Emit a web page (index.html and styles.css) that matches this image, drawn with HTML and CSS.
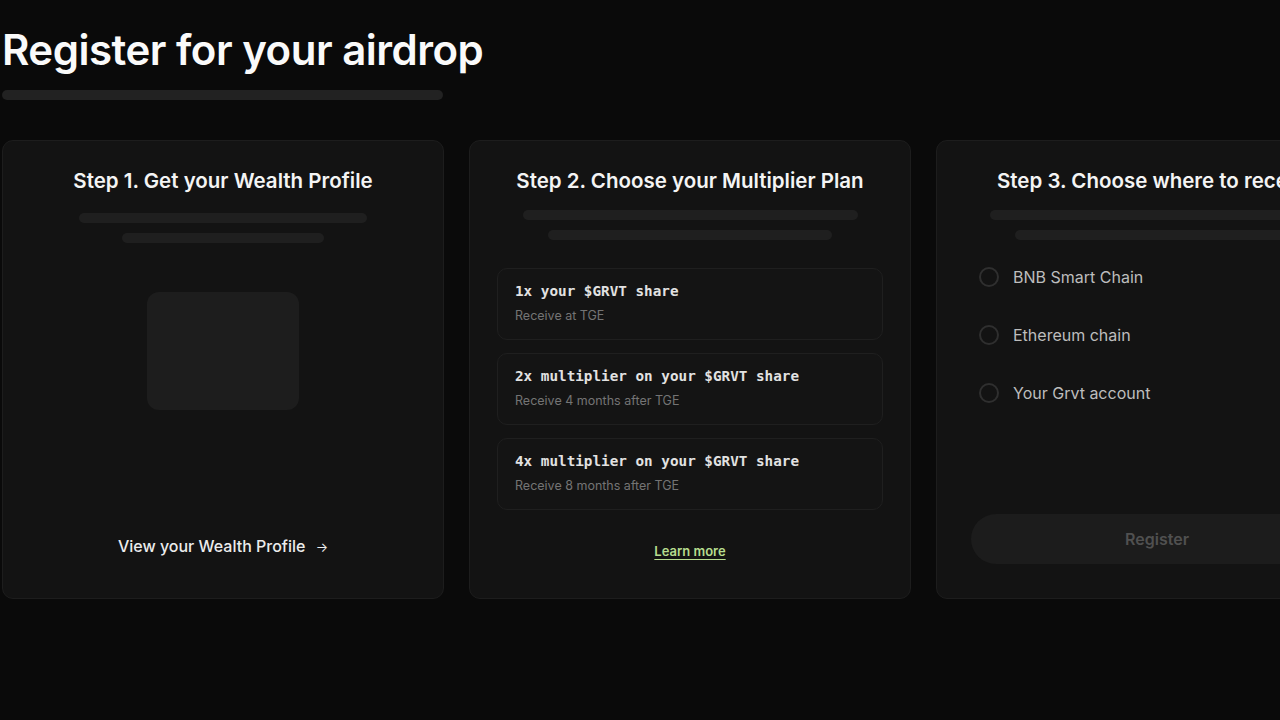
FILE: index.html
```html
<!DOCTYPE html>
<html lang="en">
<head>
  <meta charset="UTF-8" />
  <meta name="viewport" content="width=device-width, initial-scale=1.0"/>
  <title>Register for your airdrop</title>
  <link rel="stylesheet" href="styles.css">
</head>

<body>
  <h1 class="page-title">Register for your airdrop</h1>
  <div class="skeleton skeleton-title"></div>

  <div class="steps">
    <section class="card card-profile">
      <h2>Step 1. Get your Wealth Profile</h2>
      <div class="skeleton-lines">
        <div class="skeleton" style="width: 288px"></div>
        <div class="skeleton" style="width: 202px"></div>
      </div>
      <div class="profile-thumb"></div>
      <a href="#" class="profile-link">View your Wealth Profile <span class="arrow">&rarr;</span></a>
    </section>

    <section class="card card-plan">
      <h2>Step 2. Choose your Multiplier Plan</h2>
      <div class="skeleton-lines">
        <div class="skeleton" style="width: 335px"></div>
        <div class="skeleton" style="width: 284px"></div>
      </div>
      <div class="plans">
        <div class="plan">
          <div class="plan-name">1x your $GRVT share</div>
          <div class="plan-note">Receive at TGE</div>
        </div>
        <div class="plan">
          <div class="plan-name">2x multiplier on your $GRVT share</div>
          <div class="plan-note">Receive 4 months after TGE</div>
        </div>
        <div class="plan">
          <div class="plan-name">4x multiplier on your $GRVT share</div>
          <div class="plan-note">Receive 8 months after TGE</div>
        </div>
      </div>
      <a href="#" class="learn-more">Learn more</a>
    </section>

    <section class="card card-chain">
      <h2>Step 3. Choose where to receive</h2>
      <div class="skeleton-lines">
        <div class="skeleton" style="width: 335px"></div>
        <div class="skeleton" style="width: 284px"></div>
      </div>
      <div class="chains">
        <label class="chain"><span class="radio"></span>BNB Smart Chain</label>
        <label class="chain"><span class="radio"></span>Ethereum chain</label>
        <label class="chain"><span class="radio"></span>Your Grvt account</label>
      </div>
      <button class="register" disabled>Register</button>
    </section>
  </div>
</body>
</html>
```

FILE: styles.css
```css
* {margin: 0; padding: 0; box-sizing: border-box;}
body {
  font-family: "Inter", "Noto Sans", sans-serif;
  background: #0a0a0a;
  color: #f2f2f2;
  overflow: hidden;
  padding: 0 2px;
  width: 1280px;
}

.page-title {
  font-size: 42px;
  font-weight: 600;
  line-height: 52px;
  letter-spacing: -0.5px;
  padding-top: 24px;
  color: #fafafa;
}

.skeleton {
  height: 10px;
  border-radius: 5px;
  background: #1f1f1f;
}
.skeleton-title {
  width: 441px;
  margin-top: 14px;
  background: #222;
}

.steps {
  display: flex;
  gap: 25px;
  margin-top: 40px;
}

.card {
  flex-shrink: 0;
  width: 442px;
  height: 459px;
  background: #131313;
  border: 1px solid #1d1d1d;
  border-radius: 11px;
  padding: 26px 27px 0;
  display: flex;
  flex-direction: column;
  align-items: center;
  white-space: nowrap;
}

.card h2 {
  font-size: 20.5px;
  font-weight: 600;
  line-height: 28px;
  letter-spacing: 0;
  color: #f4f4f4;
}

.skeleton-lines {
  display: flex;
  flex-direction: column;
  align-items: center;
  gap: 10px;
  margin-top: 15px;
}
.card-profile .skeleton-lines {
  margin-top: 18px;
}

.profile-thumb {
  width: 152px;
  height: 118px;
  margin-top: 49px;
  border-radius: 12px;
  background: #1d1d1d;
}

.profile-link {
  margin-top: auto;
  margin-bottom: 40px;
  font-size: 16px;
  font-weight: 500;
  color: #ececec;
  text-decoration: none;
  line-height: 22px;
}
.profile-link .arrow {
  margin-left: 6px;
  font-size: 13px;
  font-weight: 400;
}

.plans {
  align-self: stretch;
  display: flex;
  flex-direction: column;
  gap: 13px;
  margin-top: 28px;
}
.plan {
  height: 72px;
  padding: 13px 17px 0;
  border: 1px solid #1f1f1f;
  border-radius: 10px;
  background: #141414;
}
.plan-name {
  font-family: "DejaVu Sans Mono", "Liberation Mono", monospace;
  font-size: 14.3px;
  font-weight: bold;
  line-height: 18px;
  color: #e2e2e2;
}
.plan-note {
  margin-top: 8px;
  font-size: 12.5px;
  line-height: 16px;
  color: #747474;
}

.learn-more {
  margin-top: auto;
  margin-bottom: 38px;
  font-size: 13px;
  font-weight: 600;
  line-height: 18px;
  color: #b6dc8e;
  text-decoration: underline;
  text-underline-offset: 3px;
}

.chains {
  align-self: stretch;
  display: flex;
  flex-direction: column;
  gap: 38px;
  margin-top: 27px;
  padding-left: 15px;
}
.chain {
  display: flex;
  align-items: center;
  gap: 14px;
  font-size: 16px;
  line-height: 20px;
  color: #bdbdbd;
}
.radio {
  width: 20px;
  height: 20px;
  border-radius: 50%;
  border: 2px solid #2f2f2f;
}

.register {
  align-self: stretch;
  margin: auto 7px 34px;
  height: 50px;
  border: none;
  border-radius: 25px;
  background: #1c1c1c;
  color: #505050;
  font-family: inherit;
  font-size: 16px;
  font-weight: 600;
}
```
